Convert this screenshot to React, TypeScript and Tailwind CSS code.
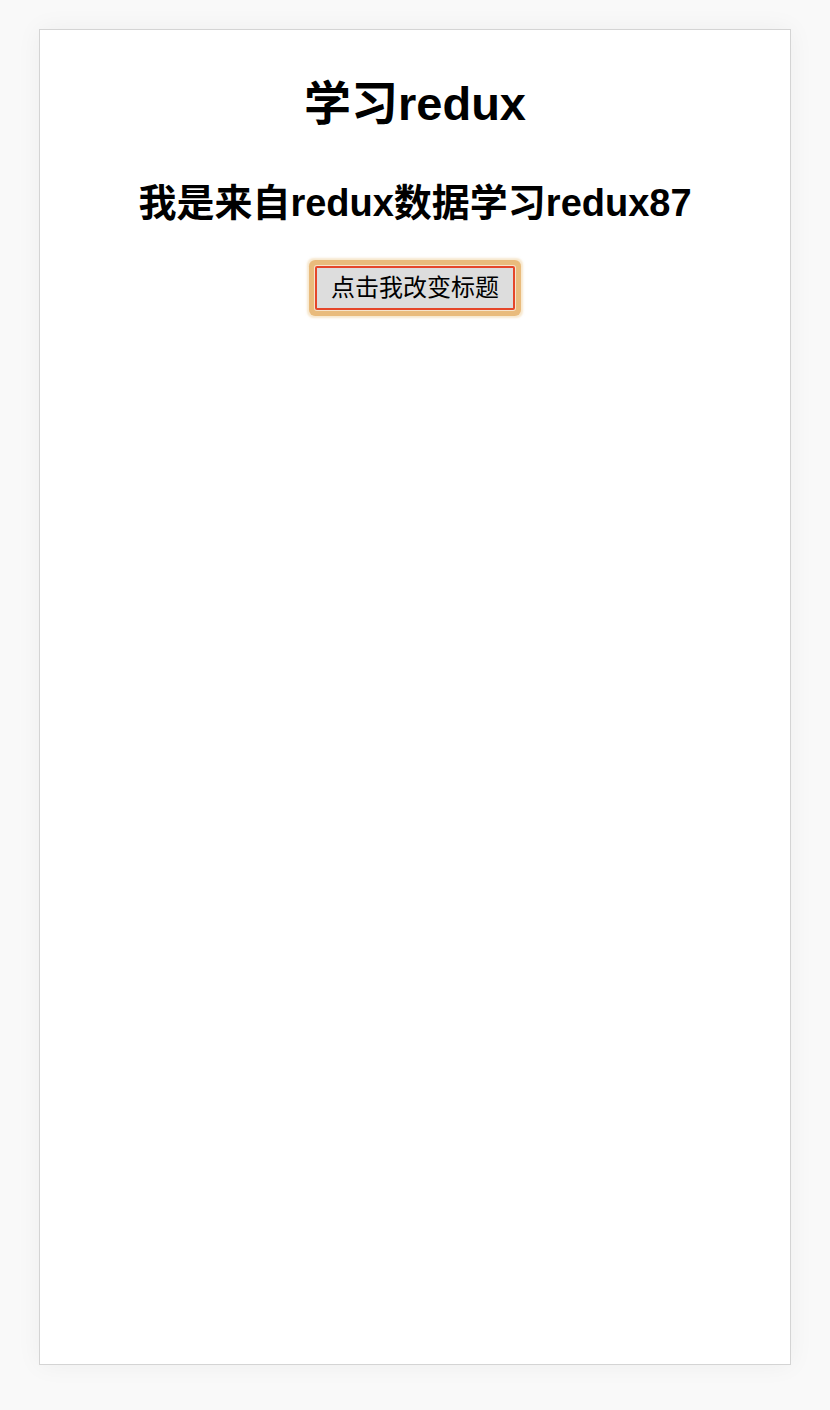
import { useState } from 'react';

const initialTitle = '学习redux';

export default function App() {
  const [title, setTitle] = useState(initialTitle);
  const [count] = useState(87);

  return (
    <div className="min-h-[1410px] w-full bg-[#f9f9f9] pt-[29px] pl-[39px] font-['Liberation_Sans','Noto_Sans_CJK_SC',sans-serif]">
      {/* Device frame */}
      <div className="w-[752px] h-[1336px] bg-white border border-[#d4d4d4] shadow-[0_0_24px_rgba(0,0,0,0.05)] flex flex-col items-center">
        <h1 className="mt-[50px] text-[47px] leading-[47px] font-bold text-black">
          {title}
        </h1>

        <h2 className="mt-[57px] text-[38px] leading-[38px] font-bold text-black">
          我是来自redux数据{title}
          {count}
        </h2>

        <button
          onClick={() => setTitle(title === initialTitle ? '新标题' : initialTitle)}
          className="mt-[44px] px-[14px] py-[8px] text-[24px] leading-[24px] text-black bg-[#dddddd] border-2 border-[#e5462a] rounded-[2px] shadow-[0_0_0_1px_#f6e4cc,0_0_0_6px_#e9bb7c,0_0_2px_8px_rgba(240,210,160,0.5)]"
        >
          点击我改变标题
        </button>
      </div>
    </div>
  );
}
